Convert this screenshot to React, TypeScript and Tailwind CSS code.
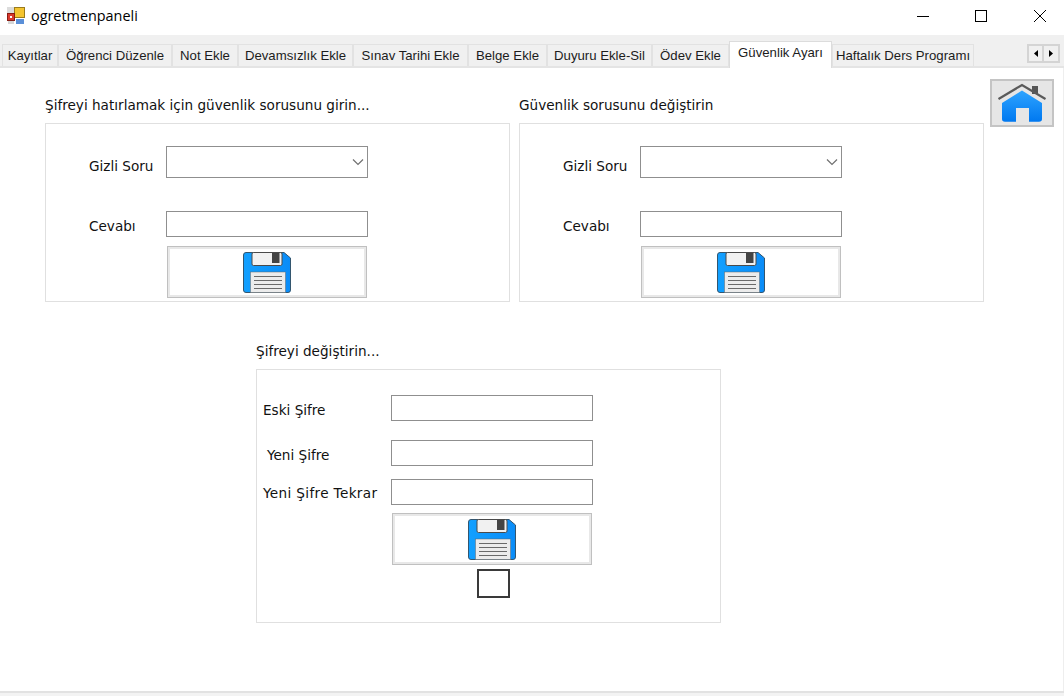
const tabs = [
  { label: "Kayıtlar", width: "w-[56px]" },
  { label: "Öğrenci Düzenle", width: "w-[114px]" },
  { label: "Not Ekle", width: "w-[66px]" },
  { label: "Devamsızlık Ekle", width: "w-[115px]" },
  { label: "Sınav Tarihi Ekle", width: "w-[115px]" },
  { label: "Belge Ekle", width: "w-[79px]" },
  { label: "Duyuru Ekle-Sil", width: "w-[105px]" },
  { label: "Ödev Ekle", width: "w-[77px]" },
];

const labelFont = "font-['DejaVu_Sans',sans-serif] text-[13.6px] text-[#111111]";
const tabFont = "font-['Liberation_Sans',sans-serif] text-[13.2px] text-[#1c1c1c] whitespace-nowrap";
const inputBox = "h-[26px] w-[202px] border border-[#8f8f8f] bg-white";

function AppIcon() {
  return (
    <svg width="18" height="18" viewBox="0 0 18 18">
      <rect x="0" y="0" width="8" height="6" fill="#dcdcdc" />
      <rect x="7.5" y="0.5" width="10" height="10" fill="#f4c430" stroke="#9a7b1c" strokeWidth="1" />
      <rect x="0.5" y="6.5" width="7" height="7" fill="#d8382c" stroke="#8a1c14" strokeWidth="1" />
      <rect x="3" y="9" width="2" height="2" fill="#ffffff" />
      <rect x="1" y="14" width="6" height="3" fill="#d6d6d6" />
      <rect x="9" y="12" width="8" height="5" fill="#5a8fd8" />
    </svg>
  );
}

function WindowControls() {
  return (
    <div className="ml-auto flex items-center pr-[18px]">
      <svg width="12" height="12" viewBox="0 0 12 12" stroke="#000000" strokeWidth="1">
        <path d="M0 6.5 H12" />
      </svg>
      <svg className="ml-[46px]" width="12" height="12" viewBox="0 0 12 12" fill="none" stroke="#000000" strokeWidth="1">
        <rect x="0.5" y="0.5" width="11" height="11" />
      </svg>
      <svg className="ml-[47px]" width="12" height="12" viewBox="0 0 12 12" fill="none" stroke="#000000" strokeWidth="1">
        <path d="M0 0 L12 12 M12 0 L0 12" />
      </svg>
    </div>
  );
}

function HomeIcon() {
  return (
    <svg width="48" height="42" viewBox="0 0 48 42">
      <defs>
        <linearGradient id="homeBlue" x1="0" y1="0" x2="0" y2="1">
          <stop offset="0" stopColor="#2ea4ff" />
          <stop offset="1" stopColor="#0078f0" />
        </linearGradient>
      </defs>
      <path
        d="M24 8.5 L44 21 V37 Q44 39.7 41 39.7 H31 V26 H18 V39.7 H7 Q4 39.7 4 37 V21 Z"
        fill="url(#homeBlue)"
      />
      <rect x="34" y="4" width="6" height="8" fill="#555555" />
      <path d="M0.5 17 L24 3 L47.5 17" fill="none" stroke="#5a5a5a" strokeWidth="2.2" />
    </svg>
  );
}

function SaveIcon() {
  return (
    <svg width="48" height="41" viewBox="0 0 48 41">
      <defs>
        <linearGradient id="diskBlue" x1="0" y1="0" x2="1" y2="0">
          <stop offset="0" stopColor="#12a0ff" />
          <stop offset="1" stopColor="#0a8cf8" />
        </linearGradient>
      </defs>
      <path
        d="M3 0.5 H41 L47.5 6 V38 Q47.5 40.5 45 40.5 H3 Q0.5 40.5 0.5 38 V3 Q0.5 0.5 3 0.5 Z"
        fill="url(#diskBlue)"
        stroke="#33566f"
        strokeWidth="1"
      />
      <rect x="9" y="0.5" width="30" height="13" rx="1.5" fill="#f1f1f1" stroke="#4a4a4a" strokeWidth="1" />
      <rect x="29" y="1" width="7.5" height="10" fill="#444444" />
      <rect x="7.5" y="20" width="35" height="20.5" fill="#ececec" stroke="#666666" strokeWidth="0.5" />
      <rect x="11" y="24" width="28" height="1" fill="#6a6a6a" />
      <rect x="11" y="28" width="28" height="1" fill="#6a6a6a" />
      <rect x="11" y="32" width="28" height="1" fill="#6a6a6a" />
      <rect x="11" y="36" width="28" height="1" fill="#6a6a6a" />
    </svg>
  );
}

function SaveButton() {
  return (
    <button className="flex h-[52px] w-[200px] items-center justify-center border border-[#c0c0c0] bg-white shadow-[inset_0_0_0_2px_#e8e8e8]">
      <SaveIcon />
    </button>
  );
}

function SecurityPanel({ title }: { title: string }) {
  return (
    <section className="mt-[16px] w-[465px]">
      <h2 className={`${labelFont} mb-[9px] h-[19px] pt-[1px] leading-[19px] font-normal whitespace-nowrap`}>{title}</h2>
      <div className="h-[179px] border border-[#e0e0e0] bg-white pl-[43px] pt-[22px]">
        <div className="flex items-center">
          <span className={`${labelFont} w-[77px] pt-[9px]`}>Gizli Soru</span>
          <div className="flex h-[32px] w-[202px] items-center justify-end border border-[#8f8f8f] bg-white pr-[3px]">
            <svg width="12" height="8" viewBox="0 0 12 8" fill="none" stroke="#707070" strokeWidth="1.2">
              <path d="M1 1.5 L6 6.5 L11 1.5" />
            </svg>
          </div>
        </div>
        <div className="mt-[33px] flex items-center">
          <span className={`${labelFont} w-[77px] pt-[5px]`}>Cevabı</span>
          <div className={inputBox} />
        </div>
        <div className="ml-[78px] mt-[9px]">
          <SaveButton />
        </div>
      </div>
    </section>
  );
}

function PasswordRow({ label, className }: { label: string; className: string }) {
  return (
    <div className={`flex items-center ${className}`}>
      <span className={`${labelFont} w-[128px] whitespace-nowrap`}>{label}</span>
      <div className={inputBox} />
    </div>
  );
}

export default function App() {
  return (
    <div className="flex h-[696px] w-[1064px] flex-col overflow-hidden bg-white">
      <header className="flex h-[35px] shrink-0 items-start bg-white pl-[7px] pt-[7px]">
        <AppIcon />
        <span className="ml-[6px] font-['Open_Sans',sans-serif] text-[14.4px] leading-[18px] text-black">
          ogretmenpaneli
        </span>
        <div className="ml-auto flex h-[18px] items-center">
          <WindowControls />
        </div>
      </header>

      <nav className="flex h-[33px] shrink-0 items-end border-b-2 border-[#e4e4e4] bg-[#f0f0f0] pl-[2px]">
        {tabs.map((tab) => (
          <div
            key={tab.label}
            className={`${tabFont} ${tab.width} flex h-[22px] items-center justify-center border border-b-0 border-[#e2e2e2] bg-[#f0f0f0] pt-[1px]`}
          >
            {tab.label}
          </div>
        ))}
        <div
          className={`${tabFont} -mb-[2px] flex h-[27px] w-[103px] items-start justify-center border border-b-0 border-[#dcdcdc] bg-white pt-[1px]`}
        >
          Güvenlik Ayarı
        </div>
        <div
          className={`${tabFont} flex h-[22px] w-[142px] items-center justify-center border border-b-0 border-[#e2e2e2] bg-[#f0f0f0] pt-[1px]`}
        >
          Haftalık Ders Programı
        </div>
        <div className="mb-[3px] ml-[53px] flex h-[19px] border-2 border-[#d4d4d4] bg-[#f0f0f0]">
          <div className="flex w-[15px] items-center justify-center border-r-2 border-[#d4d4d4]">
            <svg width="4" height="7" viewBox="0 0 4 7" fill="#000000">
              <path d="M4 0 V7 L0 3.5 Z" />
            </svg>
          </div>
          <div className="flex w-[14px] items-center justify-center">
            <svg width="4" height="7" viewBox="0 0 4 7" fill="#000000">
              <path d="M0 0 V7 L4 3.5 Z" />
            </svg>
          </div>
        </div>
      </nav>

      <main className="flex-1 border-r border-[#eeeeee] pl-[45px] pt-[11px]">
        <div className="flex items-start gap-[9px]">
          <SecurityPanel title="Şifreyi hatırlamak için güvenlik sorusunu girin..." />
          <SecurityPanel title="Güvenlik sorusunu değiştirin" />
          <button className="-ml-[3px] flex h-[48px] w-[64px] shrink-0 items-center justify-center border-2 border-[#c4c4c4] bg-[#e6e6e6]">
            <HomeIcon />
          </button>
        </div>

        <section className="ml-[211px] mt-[39px] w-[465px]">
          <h2 className={`${labelFont} mb-[9px] h-[19px] pt-[1px] leading-[19px] font-normal`}>Şifreyi değiştirin...</h2>
          <div className="h-[254px] border border-[#e0e0e0] bg-white pl-[6px] pt-[25px]">
            <PasswordRow label="Eski Şifre" className="[&>span]:pt-[4px]" />
            <PasswordRow label="Yeni Şifre" className="mt-[19px] [&>span]:pl-[4px] [&>span]:pt-[4px]" />
            <PasswordRow label="Yeni Şifre Tekrar" className="mt-[13px] [&>span]:pt-[2px] [&>span]:tracking-[0.35px]" />
            <div className="ml-[129px] mt-[8px]">
              <SaveButton />
            </div>
            <div className="ml-[214px] mt-[4px] h-[29px] w-[33px] border-2 border-[#3a3a3a] bg-white" />
          </div>
        </section>
      </main>

      <footer className="h-[5px] shrink-0 border-t-2 border-[#e2e2e2] bg-[#f3f3f3]" />
    </div>
  );
}
